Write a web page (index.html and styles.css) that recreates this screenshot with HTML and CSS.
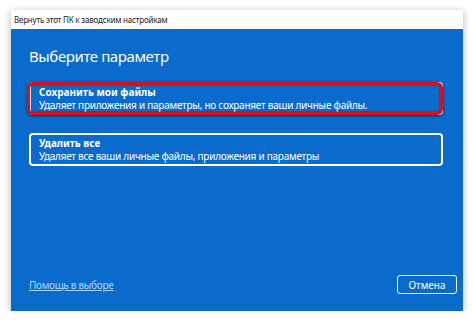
FILE: index.html
```html
<!DOCTYPE html>
<html lang="ru">
<head>
	<meta charset="UTF-8">
	<title>Вернуть этот ПК к заводским настройкам</title>
	<link rel="stylesheet" href="styles.css">
</head>
<body>

	<div class="window">
		<div class="titlebar">Вернуть этот ПК к заводским настройкам</div>

		<div class="content">
			<h1>Выберите параметр</h1>

			<div class="option marked">
				<b>Сохранить мои файлы</b>
				<span>Удаляет приложения и параметры, но сохраняет ваши личные файлы.</span>
				<div class="mark"></div>
			</div>

			<div class="option">
				<b>Удалить все</b>
				<span>Удаляет все ваши личные файлы, приложения и параметры</span>
			</div>

			<div class="footer">
				<a href="#">Помощь в выборе</a>
				<button>Отмена</button>
			</div>
		</div>
	</div>

</body>
</html>
```

FILE: styles.css
```css
body {
	margin: 0;
	background: #fff;
	font-family: "Noto Sans", sans-serif;
}

.window {
	margin: 10px 0 0 11px;
	width: 452px;
	height: 301px;
	display: flex;
	flex-direction: column;
	box-shadow: 0 2px 8px rgba(0, 0, 0, 0.3);
}

.titlebar {
	height: 19px;
	line-height: 19px;
	padding-left: 3px;
	font-size: 8px;
	letter-spacing: -0.2px;
	color: #1a1a1a;
	background: #fff;
}

.content {
	flex: 1;
	display: flex;
	flex-direction: column;
	padding: 16px 20px 17px 18px;
	background: #0b6bcc;
	color: #fff;
}

h1 {
	margin: 0 0 15px;
	font-size: 15px;
	letter-spacing: -0.4px;
	line-height: 22px;
	font-weight: normal;
}

.option {
	position: relative;
	height: 33px;
	box-sizing: border-box;
	padding: 2px 8px;
	border: 2px solid #fff;
	border-radius: 4px;
	font-size: 10px;
	line-height: 13px;
}

.option + .option {
	margin-top: 18px;
}

.option b,
.option span {
	display: block;
	white-space: nowrap;
}

.option span {
	letter-spacing: -0.25px;
}

.mark {
	position: absolute;
	left: -4px;
	top: -2px;
	right: -2px;
	bottom: -2px;
	border: 3px solid #d4111f;
	border-radius: 6px;
	box-shadow: 0 1px 3px rgba(0, 0, 0, 0.6), inset 0 0 2px rgba(0, 0, 0, 0.5);
}

.footer {
	margin-top: auto;
	display: flex;
	justify-content: space-between;
	align-items: center;
	margin-right: -14px;
}

.footer a {
	font-size: 10px;
	letter-spacing: -0.3px;
	color: #a9d3ff;
}

.footer button {
	width: 60px;
	height: 19px;
	padding: 0;
	font-family: inherit;
	font-size: 10px;
	color: #fff;
	background: transparent;
	border: 1.5px solid #fff;
	border-radius: 3px;
}
```
